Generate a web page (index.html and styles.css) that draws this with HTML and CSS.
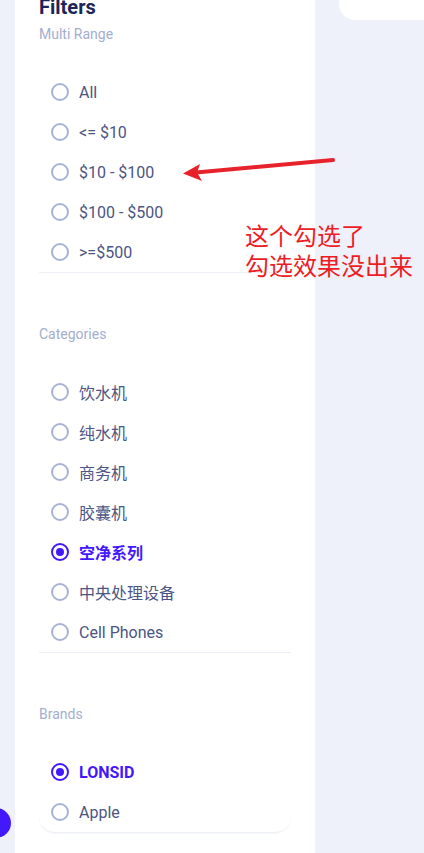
FILE: index.html
```html
<!DOCTYPE html>
<html lang="zh-CN">
  <head>
    <meta charset="UTF-8" />
    <meta name="viewport" content="width=device-width, initial-scale=1.0" />
    <title>Filters</title>
    <link rel="stylesheet" href="styles.css">
  </head>
  <body>
    <div class="page">
      <aside class="filters">
        <h2 class="filters-title">Filters</h2>

        <section class="filter-group">
          <p class="group-label">Multi Range</p>
          <div class="option-list">
            <label class="option"><input type="radio" name="range" /><span class="radio-mark"></span>All</label>
            <label class="option"><input type="radio" name="range" /><span class="radio-mark"></span>&lt;= $10</label>
            <label class="option"><input type="radio" name="range" /><span class="radio-mark"></span>$10 - $100</label>
            <label class="option"><input type="radio" name="range" /><span class="radio-mark"></span>$100 - $500</label>
            <label class="option"><input type="radio" name="range" /><span class="radio-mark"></span>&gt;=$500</label>
          </div>
        </section>

        <section class="filter-group">
          <p class="group-label">Categories</p>
          <div class="option-list">
            <label class="option"><input type="radio" name="category" /><span class="radio-mark"></span>饮水机</label>
            <label class="option"><input type="radio" name="category" /><span class="radio-mark"></span>纯水机</label>
            <label class="option"><input type="radio" name="category" /><span class="radio-mark"></span>商务机</label>
            <label class="option"><input type="radio" name="category" /><span class="radio-mark"></span>胶囊机</label>
            <label class="option"><input type="radio" name="category" checked /><span class="radio-mark"></span>空净系列</label>
            <label class="option"><input type="radio" name="category" /><span class="radio-mark"></span>中央处理设备</label>
            <label class="option"><input type="radio" name="category" /><span class="radio-mark"></span>Cell Phones</label>
          </div>
        </section>

        <section class="filter-group">
          <p class="group-label">Brands</p>
          <div class="option-list last">
            <label class="option"><input type="radio" name="brand" checked /><span class="radio-mark"></span>LONSID</label>
            <label class="option"><input type="radio" name="brand" /><span class="radio-mark"></span>Apple</label>
          </div>
        </section>
      </aside>

      <main class="content">
        <div class="summary-card">
          <span class="summary-value">9 results found</span>
        </div>
      </main>
    </div>

    <svg class="note-arrow" width="160" height="36" viewBox="0 0 160 36">
      <line x1="153" y1="10" x2="16" y2="22.5" stroke="#e8222b" stroke-width="4" stroke-linecap="round" />
      <polygon points="3,23.5 20,14 17,22.5 22,31" fill="#e8222b" />
    </svg>
    <p class="note">这个勾选了<br />勾选效果没出来</p>

    <button class="fab"></button>
  </body>
</html>
```

FILE: styles.css
```css
body {
  margin: 0;
  background: #eef1fa;
  font-family: Roboto, "Noto Sans CJK SC", sans-serif;
  overflow: hidden;
}
.page {
  display: flex;
  gap: 24px;
  margin-top: -5px;
  padding-left: 15px;
}
.filters {
  width: 300px;
  min-height: 900px;
  box-sizing: border-box;
  padding: 0 24px;
  background: white;
  flex-shrink: 0;
}
.filters-title {
  margin: 0 0 5px;
  font-size: 20px;
  line-height: 24px;
  font-weight: 700;
  color: #1b2559;
}
.filter-group + .filter-group {
  margin-top: 51px;
}
.group-label {
  margin: 0;
  font-size: 14px;
  line-height: 20px;
  color: #a3aed0;
}
.option-list {
  padding-top: 28px;
  border-bottom: 1px solid #eef0f8;
}
.option-list.last {
  border-radius: 0 0 16px 16px;
  box-shadow: 0 1px 1px rgba(112, 144, 176, 0.06);
}
.option {
  display: flex;
  align-items: center;
  height: 40px;
  padding-left: 12px;
  font-size: 16px;
  color: #4c5583;
  cursor: pointer;
}
.option input {
  display: none;
}
.radio-mark {
  width: 18px;
  height: 18px;
  box-sizing: border-box;
  border: 2px solid #a9b3d6;
  border-radius: 50%;
  margin-right: 10px;
  display: flex;
  align-items: center;
  justify-content: center;
}
.option input:checked + .radio-mark {
  border-color: #4318ff;
}
.option input:checked + .radio-mark::after {
  content: "";
  width: 8px;
  height: 8px;
  border-radius: 50%;
  background: #4318ff;
}
.option:has(input:checked) {
  color: #4318ff;
  font-weight: 700;
}
.content {
  flex: 1;
}
.summary-card {
  height: 25px;
  background: white;
  border-radius: 0 0 0 16px;
  padding: 0 24px;
  overflow: hidden;
}
.summary-value {
  display: block;
  margin-top: -11px;
  font-size: 18px;
  line-height: 20px;
  font-weight: 500;
  color: #1b2559;
  white-space: nowrap;
}
.note-arrow {
  position: absolute;
  left: 180px;
  top: 150px;
}
.note {
  position: absolute;
  left: 245px;
  top: 220px;
  margin: 0;
  font-family: "Noto Sans CJK SC", sans-serif;
  font-size: 24px;
  line-height: 30px;
  color: #ee1d25;
}
.fab {
  position: fixed;
  left: -19px;
  top: 808px;
  width: 30px;
  height: 30px;
  border: none;
  border-radius: 50%;
  background: #4318ff;
  padding: 0;
}
```
